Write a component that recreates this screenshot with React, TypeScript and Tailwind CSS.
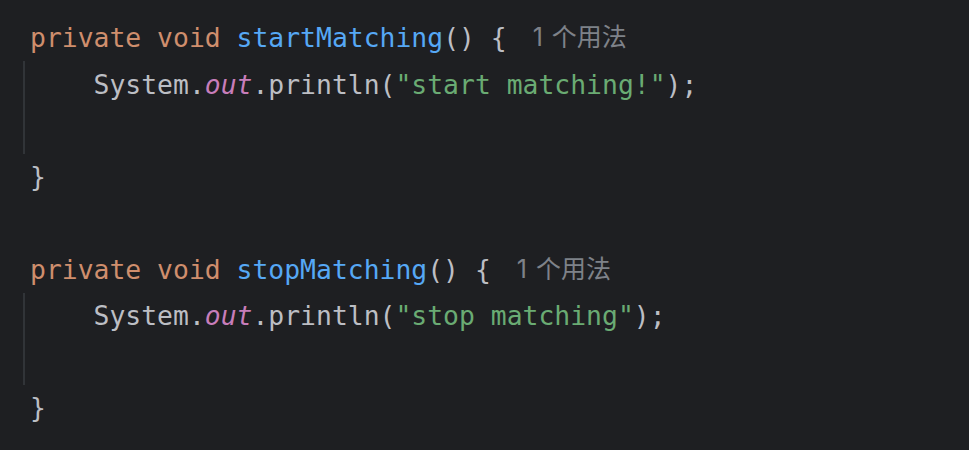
const mono = { fontFamily: '"DejaVu Sans Mono", "Liberation Mono", monospace' }

function Hint() {
  return (
    <span className="ml-[26px] text-[25px] text-[#7e8289] font-['Inter','Noto_Sans_CJK_SC',sans-serif] flex items-center">
      <span>1</span>
      <span className="ml-[9px]">个用法</span>
    </span>
  )
}

function Method({ name, msg }: { name: string; msg: string }) {
  return (
    <div>
      <div className="flex items-center h-[46.25px] whitespace-pre">
        <span className="text-[#cf8e6d]">private void </span>
        <span className="text-[#56a8f5]">{name}</span>
        <span>() {'{'}</span>
        <Hint />
      </div>
      <div className="-ml-[7px] border-l-2 border-[#313438] pl-[5px]">
        <div className="flex items-center h-[46.25px] whitespace-pre">
          <span>{'    System.'}</span>
          <span className="italic text-[#c77dba]">out</span>
          <span>.println(</span>
          <span className="text-[#6aab73]">"{msg}"</span>
          <span>);</span>
        </div>
        <div className="h-[46.25px]" />
      </div>
      <div className="flex items-center h-[46.25px]">{'}'}</div>
    </div>
  )
}

export default function App() {
  return (
    <div className="w-[969px] h-[450px] overflow-hidden bg-[#1e1f22] text-[#bcbec4] text-[26.4px] pl-[30px] pt-[15px]" style={mono}>
      <Method name="startMatching" msg="start matching!" />
      <div className="h-[46.25px]" />
      <Method name="stopMatching" msg="stop matching" />
    </div>
  )
}
